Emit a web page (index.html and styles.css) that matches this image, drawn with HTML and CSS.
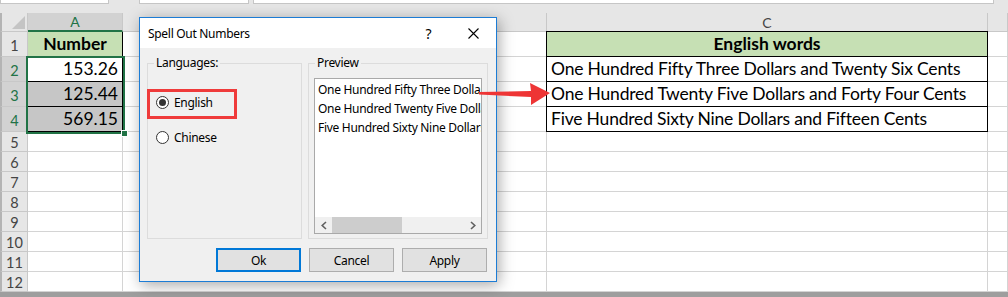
FILE: index.html
```html
<!DOCTYPE html>
<html>
<head>
<meta charset="utf-8">
<link rel="stylesheet" href="styles.css">
</head>
<body>
<div class="screen">
  <div class="topbar">
    <div class="box b1"></div>
    <div class="box b2"></div>
    <div class="box b3"></div>
  </div>
  <div class="grid">
    <div class="corner"><svg width="13" height="13" viewBox="0 0 13 13"><polygon points="13,0 13,13 0,13" fill="#c4c4c4"/></svg></div>
    <div class="ch selh">A</div>
    <div class="ch">B</div>
    <div class="ch">C</div>
    <div class="ch"></div>

    <div class="rh">1</div>
    <div class="c hdr bk">Number</div>
    <div class="c"></div>
    <div class="c hdr bk bkc">English words</div>
    <div class="c"></div>

    <div class="rh selr">2</div>
    <div class="c num bk active">153.26<div class="selection"><span class="handle"></span></div></div>
    <div class="c"></div>
    <div class="c txt bk bkc">One Hundred Fifty Three Dollars and Twenty Six Cents</div>
    <div class="c"></div>

    <div class="rh selr">3</div>
    <div class="c num bk shade">125.44</div>
    <div class="c"></div>
    <div class="c txt bk bkc">One Hundred Twenty Five Dollars and Forty Four Cents</div>
    <div class="c"></div>

    <div class="rh selr">4</div>
    <div class="c num bk shade">569.15</div>
    <div class="c"></div>
    <div class="c txt bk bkc">Five Hundred Sixty Nine Dollars and Fifteen Cents</div>
    <div class="c"></div>

    <div class="rh">5</div><div class="c"></div><div class="c"></div><div class="c"></div><div class="c"></div>
    <div class="rh">6</div><div class="c"></div><div class="c"></div><div class="c"></div><div class="c"></div>
    <div class="rh">7</div><div class="c"></div><div class="c"></div><div class="c"></div><div class="c"></div>
    <div class="rh">8</div><div class="c"></div><div class="c"></div><div class="c"></div><div class="c"></div>
    <div class="rh">9</div><div class="c"></div><div class="c"></div><div class="c"></div><div class="c"></div>
    <div class="rh">10</div><div class="c"></div><div class="c"></div><div class="c"></div><div class="c"></div>
    <div class="rh">11</div><div class="c"></div><div class="c"></div><div class="c"></div><div class="c"></div>
    <div class="rh">12</div><div class="c"></div><div class="c"></div><div class="c"></div><div class="c"></div>
  </div>
  <div class="bottombar"></div>

  <div class="dialog">
    <div class="titlebar">
      <span class="title">Spell Out Numbers</span>
      <span class="tbtn">?</span>
      <span class="tbtn"><svg width="11" height="11" viewBox="0 0 11 11"><path d="M0.5 0.5 L10.5 10.5 M10.5 0.5 L0.5 10.5" stroke="#000" stroke-width="1.1" fill="none"/></svg></span>
    </div>
    <div class="dbody">
      <div class="groups">
        <fieldset class="group lang">
          <legend>Languages:</legend>
          <label class="radio first"><span class="rb on"></span>English</label>
          <label class="radio"><span class="rb"></span>Chinese</label>
        </fieldset>
        <fieldset class="group preview">
          <legend>Preview</legend>
          <div class="listbox">
            <div class="items">
              <div>One Hundred Fifty Three Dollars and Twenty Six Cents</div>
              <div>One Hundred Twenty Five Dollars and Forty Four Cents</div>
              <div>Five Hundred Sixty Nine Dollars and Fifteen Cents</div>
            </div>
            <div class="hbar">
              <span class="arr"><svg width="8" height="9" viewBox="0 0 8 9"><path d="M6 1 L2.2 4.5 L6 8" stroke="#606060" stroke-width="1.6" fill="none"/></svg></span>
              <span class="track"><span class="thumb"></span></span>
              <span class="arr"><svg width="8" height="9" viewBox="0 0 8 9"><path d="M2 1 L5.8 4.5 L2 8" stroke="#606060" stroke-width="1.6" fill="none"/></svg></span>
            </div>
          </div>
        </fieldset>
      </div>
      <div class="buttons">
        <button class="btn def">Ok</button>
        <button class="btn">Cancel</button>
        <button class="btn">Apply</button>
      </div>
    </div>
    <div class="redbox"></div>
  </div>

  <svg class="arrow" width="1008" height="297" viewBox="0 0 1008 297">
    <polygon points="479,92 531,91 530,83 550,93 531,105 531,97 479,94.5" fill="#ee3535"/>
  </svg>
</div>
</body>
</html>
```

FILE: styles.css
```css
* { box-sizing: border-box; }
body { margin: 0; background: #fff; }

.screen {
  position: relative;
  width: 1008px;
  height: 297px;
  overflow: hidden;
  background: #e6e6e6;
  font-family: "Lato", "Liberation Sans", sans-serif;
}

.topbar { height: 13px; display: flex; align-items: flex-start; }
.topbar .box { height: 4px; background: #fff; border: 1px solid #c6c6c6; border-top: none; }
.b1 { width: 109px; }
.b2 { width: 110px; margin-left: 30px; }
.b3 { width: 741px; margin-left: 4px; }

.grid {
  display: grid;
  grid-template-columns: 28px 95px 424px 441px 20px;
  grid-template-rows: 19px repeat(4, 25px) repeat(8, 20px);
  background: #fff;
}

.corner {
  background: #e6e6e6;
  border-left: 2px solid #b4b4b4;
  border-right: 1px solid #c8c8c8;
  border-bottom: 1px solid #c8c8c8;
  display: flex;
  align-items: flex-end;
  justify-content: flex-end;
  padding: 0 2px 2px 0;
}

.ch {
  background: #e6e6e6;
  border-right: 1px solid #c8c8c8;
  border-bottom: 1px solid #c8c8c8;
  font-size: 14px;
  color: #444;
  display: flex;
  align-items: center;
  justify-content: center;
}
.ch.selh { background: #d2d2d2; color: #217346; border-bottom: 2px solid #217346; }

.rh {
  background: #e6e6e6;
  border-left: 2px solid #b4b4b4;
  border-right: 1px solid #c8c8c8;
  border-bottom: 1px solid #c8c8c8;
  font-size: 14.5px;
  color: #444;
  display: flex;
  align-items: center;
  justify-content: center;
  padding-top: 2px;
}
.rh.selr { background: #d2d2d2; color: #217346; }

.c {
  border-right: 1px solid #d4d4d4;
  border-bottom: 1px solid #d4d4d4;
  font-size: 17.5px;
  line-height: 24px;
  color: #000;
  white-space: nowrap;
  overflow: visible;
}
.c.bk { border-right-color: #000; border-bottom-color: #000; }
.c.bkc { box-shadow: -1px 0 0 #000, 0 -1px 0 #000, -1px -1px 0 #000; }
.c.hdr { background: #c6e0b4; font-weight: 700; text-align: center; }
.c.num { text-align: right; padding-right: 4px; }
.c.txt { padding-left: 4px; letter-spacing: -0.2px; }
.c.shade { background: #c6c6c6; }
.c.active { position: relative; }

.selection {
  position: absolute;
  left: -2px;
  top: -1px;
  width: 99px;
  height: 78px;
  border: 2px solid #217346;
  pointer-events: none;
}
.handle {
  position: absolute;
  right: -5px;
  bottom: -5px;
  width: 7px;
  height: 7px;
  background: #217346;
  border: 1px solid #fff;
}

.bottombar { height: 5px; background: #9e9e9e; }

/* dialog */
.dialog {
  position: absolute;
  left: 139px;
  top: 17px;
  width: 358px;
  height: 265px;
  border: 1px solid #1c7cd5;
  background: #f0f0f0;
  box-shadow: 2px 3px 14px rgba(0, 0, 0, 0.35);
  font-family: "Noto Sans", "Open Sans", sans-serif;
  font-size: 12px;
  letter-spacing: -0.3px;
  color: #000;
  display: flex;
  flex-direction: column;
}
.titlebar {
  height: 30px;
  background: #fff;
  display: flex;
  align-items: center;
  padding-left: 8px;
}
.title { flex: 1; }
.tbtn {
  width: 45px;
  height: 30px;
  display: flex;
  align-items: center;
  justify-content: center;
  font-size: 14px;
}

.dbody {
  flex: 1;
  padding: 7px 8px 9px 7px;
  display: flex;
  flex-direction: column;
}
.groups { display: flex; gap: 6px; height: 184px; }
.group {
  margin: 0;
  border: 1px solid #dcdcdc;
  padding: 0 5px 4px 5px;
  min-width: 0;
}
.group legend {
  padding: 0 2px;
  margin-left: 1px;
  line-height: 16px;
  font-size: 12px;
}
.lang { width: 155px; display: flex; flex-direction: column; }
.preview { width: 180px; }

.radio {
  display: flex;
  align-items: center;
  height: 16px;
  margin-top: 19px;
  margin-left: 3px;
  gap: 5px;
}
.radio.first { margin-top: 23px; }
.rb {
  width: 13px;
  height: 13px;
  border: 1px solid #333;
  border-radius: 50%;
  background: #fff;
  display: flex;
  align-items: center;
  justify-content: center;
}
.rb.on::after {
  content: "";
  width: 7px;
  height: 7px;
  border-radius: 50%;
  background: #333;
}

.listbox {
  margin-top: 7px;
  height: 156px;
  border: 1px solid #a9a9a9;
  background: #fff;
  display: flex;
  flex-direction: column;
}
.items {
  flex: 1;
  overflow: hidden;
  white-space: nowrap;
  padding: 1px 0 0 3px;
  line-height: 19px;
}
.hbar { height: 16px; background: #f0f0f0; display: flex; }
.arr { width: 17px; display: flex; align-items: center; justify-content: center; }
.track { flex: 1; position: relative; }
.thumb { position: absolute; left: 0; top: 0; bottom: 0; width: 70px; background: #cdcdcd; }

.buttons {
  margin-top: 9px;
  display: flex;
  justify-content: flex-end;
  gap: 8px;
  padding-right: 1px;
}
.btn {
  width: 85px;
  height: 24px;
  background: #e1e1e1;
  border: 1px solid #adadad;
  font-family: inherit;
  font-size: 12px;
  letter-spacing: -0.3px;
  color: #000;
  padding: 0;
  margin: 0;
}
.btn.def { border: 2px solid #0078d7; }

.redbox {
  position: absolute;
  left: 7px;
  top: 71px;
  width: 90px;
  height: 30px;
  border: 3px solid #ef3b3b;
}

.arrow { position: absolute; left: 0; top: 0; pointer-events: none; }
```
